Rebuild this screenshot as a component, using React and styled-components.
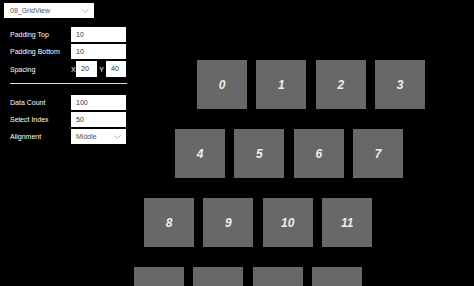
import React from "react";
import styled, { createGlobalStyle } from "styled-components";

const GlobalStyle = createGlobalStyle`
  html, body {
    margin: 0;
    padding: 0;
    background: #000;
    font-family: "Liberation Sans", Arial, sans-serif;
  }
`;

const Page = styled.div`
  display: flex;
  width: 474px;
  height: 286px;
  overflow: hidden;
  background: #000;
`;

const Sidebar = styled.div`
  width: 130px;
  flex-shrink: 0;
  padding: 3px 0 0 4px;
  box-sizing: border-box;
`;

const Select = styled.div`
  display: flex;
  align-items: center;
  justify-content: space-between;
  box-sizing: border-box;
  width: ${(p) => p.width}px;
  height: 15px;
  padding: 0 5px 0 ${(p) => p.padLeft || 6}px;
  background: #fff;
  color: #555;
  font-size: 7px;
`;

const Form = styled.div`
  display: flex;
  flex-direction: column;
  gap: 2px;
  padding-left: 6px;
  margin-top: ${(p) => p.top}px;
`;

const Row = styled.div`
  display: grid;
  grid-template-columns: 61px 55px;
  align-items: center;
  height: 15px;
`;

const Label = styled.span`
  color: #fff;
  font-size: 7px;
`;

const Input = styled.div`
  box-sizing: border-box;
  height: ${(p) => p.height || 15}px;
  width: ${(p) => p.width || 55}px;
  padding-left: 5px;
  background: #fff;
  color: #333;
  font-size: 7px;
  line-height: ${(p) => p.height || 15}px;
`;

const XY = styled.div`
  display: flex;
  align-items: center;
  height: 16px;
`;

const Axis = styled.span`
  color: #fff;
  font-size: 7px;
  width: ${(p) => p.width}px;
  text-align: ${(p) => (p.center ? "center" : "left")};
`;

const Divider = styled.hr`
  width: 117px;
  margin: 7px 0 9px 0;
  border: 0;
  border-top: 1px solid #d8d8d8;
`;

const Stage = styled.div`
  flex: 1;
  display: flex;
  flex-direction: column;
  gap: 20px;
  padding-top: 60px;
`;

const GridRow = styled.div`
  display: flex;
  gap: 9.4px;
  margin-left: ${(p) => p.offset}px;
`;

const Cell = styled.div`
  width: 50px;
  height: 49px;
  flex-shrink: 0;
  display: flex;
  align-items: center;
  justify-content: center;
  background: #686868;
  color: #eeeeee;
  font-size: 12px;
  font-weight: bold;
  font-style: italic;
`;

const Chevron = () => (
  <svg width="7" height="4" viewBox="0 0 7 4">
    <path d="M0.5 0.5 L3.5 3.2 L6.5 0.5" fill="none" stroke="#aaa" strokeWidth="0.9" />
  </svg>
);

const rows = [
  { offset: 67, items: [0, 1, 2, 3] },
  { offset: 45, items: [4, 5, 6, 7] },
  { offset: 14, items: [8, 9, 10, 11] },
  { offset: 4, items: [null, null, null, null] },
];

const App = () => {
  return (
    <>
      <GlobalStyle />
      <Page>
        <Sidebar>
          <Select width={90}>
            <span>08_GridView</span>
            <Chevron />
          </Select>
          <Form top={9}>
            <Row>
              <Label>Padding Top</Label>
              <Input>10</Input>
            </Row>
            <Row>
              <Label>Padding Bottom</Label>
              <Input>10</Input>
            </Row>
            <Row>
              <Label>Spacing</Label>
              <XY>
                <Axis width={5}>X</Axis>
                <Input width={21} height={16}>20</Input>
                <Axis width={9} center>Y</Axis>
                <Input width={20} height={16}>40</Input>
              </XY>
            </Row>
          </Form>
          <Form top={0}>
            <Divider />
            <Row>
              <Label>Data Count</Label>
              <Input>100</Input>
            </Row>
            <Row>
              <Label>Select Index</Label>
              <Input>50</Input>
            </Row>
            <Row>
              <Label>Alignment</Label>
              <Select width={55} padLeft={5}>
                <span>Middle</span>
                <Chevron />
              </Select>
            </Row>
          </Form>
        </Sidebar>
        <Stage>
          {rows.map((row, i) => (
            <GridRow key={i} offset={row.offset}>
              {row.items.map((n, j) => (
                <Cell key={j}>{n}</Cell>
              ))}
            </GridRow>
          ))}
        </Stage>
      </Page>
    </>
  );
};

export default App;
